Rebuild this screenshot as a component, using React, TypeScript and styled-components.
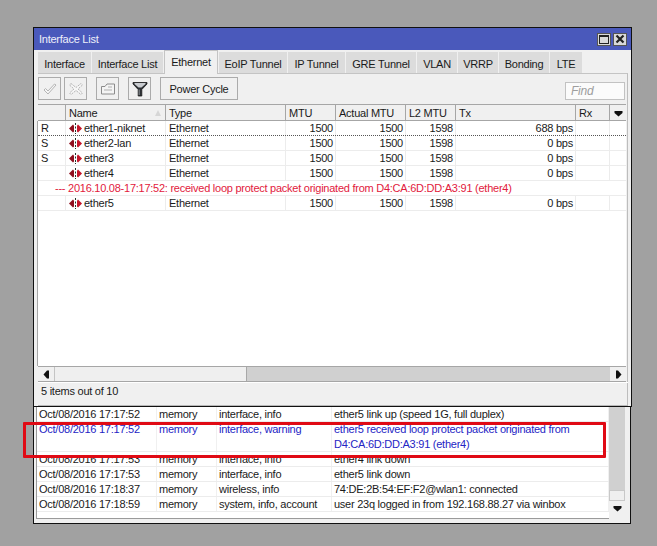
import styled, { createGlobalStyle } from 'styled-components';

const GlobalStyle = createGlobalStyle`
  html, body {
    margin: 0;
    padding: 0;
    background: #a1a1a1;
  }
  * {
    box-sizing: border-box;
  }
`;

const tabs = [
  { name: 'Interface', width: 53 },
  { name: 'Interface List', width: 71 },
  { name: 'Ethernet', width: 54 },
  { name: 'EoIP Tunnel', width: 68 },
  { name: 'IP Tunnel', width: 57 },
  { name: 'GRE Tunnel', width: 70 },
  { name: 'VLAN', width: 40 },
  { name: 'VRRP', width: 40 },
  { name: 'Bonding', width: 50 },
  { name: 'LTE', width: 32 },
];

const interfaces = [
  { flag: 'R', name: 'ether1-niknet', tx: '688 bps', focused: true },
  { flag: 'S', name: 'ether2-lan', tx: '0 bps' },
  { flag: 'S', name: 'ether3', tx: '0 bps' },
  { flag: '', name: 'ether4', tx: '0 bps' },
  { comment: '--- 2016.10.08-17:17:52: received loop protect packet originated from D4:CA:6D:DD:A3:91 (ether4)' },
  { flag: '', name: 'ether5', tx: '0 bps' },
];

const logs = [
  { time: 'Oct/08/2016 17:17:52', topics: 'interface, info', message: 'ether5 link up (speed 1G, full duplex)' },
  {
    time: 'Oct/08/2016 17:17:52',
    topics: 'interface, warning',
    message: 'ether5 received loop protect packet originated from D4:CA:6D:DD:A3:91 (ether4)',
    warning: true,
  },
  { time: 'Oct/08/2016 17:17:53', topics: 'interface, info', message: 'ether4 link down' },
  { time: 'Oct/08/2016 17:17:53', topics: 'interface, info', message: 'ether5 link down' },
  { time: 'Oct/08/2016 17:18:37', topics: 'wireless, info', message: '74:DE:2B:54:EF:F2@wlan1: connected' },
  { time: 'Oct/08/2016 17:18:59', topics: 'system, info, account', message: 'user 23q logged in from 192.168.88.27 via winbox' },
];

const PortIcon = () => (
  <svg width="13" height="11" viewBox="0 0 13 11">
    <path d="M0 5.5 L4 1.5 L5 2.5 V8.5 L4 9.5 Z" fill="#8e0f1e" />
    <path d="M13 5.5 L9 1.5 L8 2.5 V8.5 L9 9.5 Z" fill="#c4152a" />
    <path d="M6.5 0 V2 M6.5 3.5 V5.5 M6.5 7 V9 M6.5 10 V11" stroke="#24342a" strokeWidth="1" />
  </svg>
);

const CheckIcon = () => (
  <svg width="16" height="14" viewBox="0 0 16 14" fill="none">
    <path d="M2 8 L6 12 L14 3 L12.5 2 L6 9 L3.5 6.5 Z" stroke="#b4b4b4" fill="#f6f6f6" />
  </svg>
);

const CrossIcon = () => (
  <svg width="16" height="14" viewBox="0 0 16 14" fill="none">
    <path
      d="M3 1.5 L8 5.5 L13 1.5 L14.5 3 L10 7 L14.5 11 L13 12.5 L8 8.5 L3 12.5 L1.5 11 L6 7 L1.5 3 Z"
      stroke="#b4b4b4"
      fill="#f6f6f6"
      strokeDasharray="2 1"
    />
  </svg>
);

const NoteIcon = () => (
  <svg width="16" height="12" viewBox="0 0 16 12" fill="none">
    <path d="M1.5 3.5 H5 L7 1 H14.5 V11 H1.5 Z" stroke="#8c8c8c" fill="#f4f4f4" />
    <path d="M8 4 H12 M4 7 H12" stroke="#b0b0b0" />
  </svg>
);

const FilterIcon = () => (
  <svg width="16" height="16" viewBox="0 0 16 16">
    <path d="M1 1.5 H15 V3 L9.8 8.5 V15 H6.2 V8.5 L1 3 Z" fill="#2c3034" stroke="#1c1c1c" strokeWidth="0.8" />
    <path d="M2.5 2 H13.5 V3 L9.5 6.5 H6.5 L2.5 3 Z" fill="#c9ccd0" />
    <path d="M7.2 8.5 V14" stroke="#8a8f94" />
  </svg>
);

const ArrowLeft = () => (
  <svg width="7" height="9" viewBox="0 0 7 9">
    <path d="M0.5 4.5 L4 0.5 H6 V8.5 H4 Z" fill="#111" />
  </svg>
);

const ArrowRight = () => (
  <svg width="7" height="9" viewBox="0 0 7 9">
    <path d="M6.5 4.5 L3 0.5 H1 V8.5 H3 Z" fill="#111" />
  </svg>
);

const ArrowDown = () => (
  <svg width="9" height="7" viewBox="0 0 9 7">
    <path d="M4.5 6.5 L0.5 3 V1 H8.5 V3 Z" fill="#111" />
  </svg>
);

export default function App() {
  return (
    <>
      <GlobalStyle />
      <Desktop>
        <LogWindow>
          <LogList>
            {logs.map((log, i) => (
              <LogRow key={i} $warning={log.warning}>
                <LogCell>{log.time}</LogCell>
                <LogCell>memory</LogCell>
                <LogCell>{log.topics}</LogCell>
                <LogCell>{log.message}</LogCell>
              </LogRow>
            ))}
          </LogList>
          <LogScroll>
            <LogTrack />
            <LogThumb />
            <ScrollButton $height={15}>
              <ArrowDown />
            </ScrollButton>
          </LogScroll>
        </LogWindow>

        <InterfaceWindow>
          <TitleBar>
            <span>Interface List</span>
            <TitleButtons>
              <TitleButton>
                <MaximizeGlyph />
              </TitleButton>
              <TitleButton>
                <svg width="10" height="10" viewBox="0 0 10 10">
                  <path d="M1.5 1.5 L8.5 8.5 M8.5 1.5 L1.5 8.5" stroke="#222" strokeWidth="2.2" />
                </svg>
              </TitleButton>
            </TitleButtons>
          </TitleBar>

          <TabBar>
            {tabs.map((t) => (
              <Tab key={t.name} $width={t.width} $active={t.name === 'Ethernet'}>
                {t.name}
              </Tab>
            ))}
          </TabBar>

          <Panel>
            <Toolbar>
              <ToolButton>
                <CheckIcon />
              </ToolButton>
              <ToolButton>
                <CrossIcon />
              </ToolButton>
              <ToolButton $gapLeft={6}>
                <NoteIcon />
              </ToolButton>
              <ToolButton $gapLeft={6}>
                <FilterIcon />
              </ToolButton>
              <TextButton>Power Cycle</TextButton>
              <FindBox>Find</FindBox>
            </Toolbar>

            <Table>
              <HeaderRow>
                <HeaderCell />
                <HeaderCell>
                  Name
                  <SortMark />
                </HeaderCell>
                <HeaderCell>Type</HeaderCell>
                <HeaderCell>MTU</HeaderCell>
                <HeaderCell>Actual MTU</HeaderCell>
                <HeaderCell>L2 MTU</HeaderCell>
                <HeaderCell>Tx</HeaderCell>
                <HeaderCell>Rx</HeaderCell>
                <MenuCell>
                  <ArrowDown />
                </MenuCell>
              </HeaderRow>

              <Rows>
                {interfaces.map((row, i) =>
                  row.comment ? (
                    <CommentRow key={i}>{row.comment}</CommentRow>
                  ) : (
                    <DataRow key={i} $focused={row.focused}>
                      <Cell>{row.flag}</Cell>
                      <NameCell>
                        <PortIcon />
                        {row.name}
                      </NameCell>
                      <Cell>Ethernet</Cell>
                      <Cell $right>1500</Cell>
                      <Cell $right>1500</Cell>
                      <Cell $right>1598</Cell>
                      <Cell $right>{row.tx}</Cell>
                      <Cell />
                    </DataRow>
                  )
                )}
              </Rows>

              <HScroll>
                <ScrollButton $height={14}>
                  <ArrowLeft />
                </ScrollButton>
                <HThumb />
                <HTrack />
                <ScrollButton $height={14}>
                  <ArrowRight />
                </ScrollButton>
              </HScroll>
            </Table>

            <StatusBar>5 items out of 10</StatusBar>
          </Panel>
        </InterfaceWindow>

        <Highlight />
      </Desktop>
    </>
  );
}

const COLUMNS = '28px 100px 120px 50px 70px 50px 120px 34px 16px';

const Desktop = styled.div`
  position: relative;
  width: 657px;
  height: 546px;
  overflow: hidden;
  background: #a1a1a1;
  font-family: 'Liberation Sans', Arial, sans-serif;
  font-size: 11px;
  letter-spacing: -0.25px;
  color: #1a1a1a;
`;

const LogWindow = styled.div`
  position: absolute;
  left: 33px;
  top: 400px;
  width: 598px;
  height: 124px;
  display: flex;
  padding: 7px 5px 4px 2px;
  background: #f0f0f0;
  border: 1px solid #111;
  border-top: none;
`;

const LogList = styled.div`
  flex: 1;
  background: #fff;
  border-left: 1px solid #9a9a9a;
  border-bottom: 1px solid #9a9a9a;
`;

const LogRow = styled.div<{ $warning?: boolean }>`
  display: grid;
  grid-template-columns: 120px 60px 115px 1fr;
  height: ${(p) => (p.$warning ? 30 : 15)}px;
  line-height: 15px;
  border-bottom: 1px solid #ececec;
  color: ${(p) => (p.$warning ? '#2424c4' : '#1a1a1a')};
`;

const LogCell = styled.div`
  padding-left: 2px;
  border-right: 1px solid #f0f0f0;
  overflow: hidden;
`;

const LogScroll = styled.div`
  width: 16px;
  height: 109px;
  display: flex;
  flex-direction: column;
`;

const LogTrack = styled.div`
  flex: 1;
  background: #d0d0d0;
`;

const LogThumb = styled.div`
  height: 11px;
  background: #efefef;
  border: 1px solid #c8c8c8;
`;

const InterfaceWindow = styled.div`
  position: absolute;
  left: 33px;
  top: 27px;
  width: 599px;
  height: 380px;
  display: flex;
  flex-direction: column;
  background: #f0f0f0;
  border: 1px solid #111;
`;

const TitleBar = styled.div`
  height: 22px;
  flex: none;
  display: flex;
  align-items: center;
  justify-content: space-between;
  padding: 0 4px 0 5px;
  background: #4a59bb;
  color: #eef0fa;
`;

const TitleButtons = styled.div`
  display: flex;
  gap: 2px;
`;

const TitleButton = styled.div`
  width: 14px;
  height: 13px;
  display: flex;
  align-items: center;
  justify-content: center;
  background: #d9d9d9;
  border: 1px solid #555;
`;

const MaximizeGlyph = styled.div`
  width: 10px;
  height: 9px;
  border: 1px solid #222;
  border-top-width: 2px;
`;

const TabBar = styled.div`
  height: 24px;
  flex: none;
  display: flex;
  align-items: flex-end;
  gap: 1px;
  padding-left: 4px;
  margin-bottom: -1px;
  position: relative;
  z-index: 1;
`;

const Tab = styled.div<{ $width: number; $active?: boolean }>`
  width: ${(p) => p.$width}px;
  height: ${(p) => (p.$active ? 24 : 21)}px;
  margin-bottom: ${(p) => (p.$active ? 0 : 1)}px;
  display: flex;
  align-items: ${(p) => (p.$active ? 'flex-start' : 'center')};
  justify-content: center;
  padding-top: ${(p) => (p.$active ? 5 : 2)}px;
  background: ${(p) => (p.$active ? '#f0f0f0' : '#dcdcdc')};
  border: ${(p) => (p.$active ? '1px solid #c4c4c4' : 'none')};
  border-bottom: none;
  white-space: nowrap;
`;

const Panel = styled.div`
  flex: 1;
  display: flex;
  flex-direction: column;
  margin: 0 3px 0 4px;
  border-top: 1px solid #c4c4c4;
  border-right: 1px solid #bdbdbd;
`;

const Toolbar = styled.div`
  height: 30px;
  flex: none;
  display: flex;
  align-items: flex-start;
  gap: 3px;
  padding-top: 3px;
`;

const ToolButton = styled.div<{ $gapLeft?: number }>`
  width: 23px;
  height: 23px;
  margin-left: ${(p) => p.$gapLeft ?? 0}px;
  display: flex;
  align-items: center;
  justify-content: center;
  background: #f0f0f0;
  border: 1px solid #ababab;
`;

const TextButton = styled.div`
  width: 78px;
  height: 23px;
  margin-left: 6px;
  display: flex;
  align-items: center;
  justify-content: center;
  border: 1px solid #ababab;
`;

const FindBox = styled.div`
  width: 60px;
  height: 18px;
  margin: 5px 2px 0 auto;
  padding-left: 5px;
  line-height: 17px;
  background: #fbfbfb;
  border: 1px solid #c2c2c2;
  color: #9e9e9e;
  font-style: italic;
  font-size: 12px;
`;

const Table = styled.div`
  flex: 1;
  width: 588px;
  display: flex;
  flex-direction: column;
  background: #fff;
  border-top: 1px solid #a6a6a6;
`;

const HeaderRow = styled.div`
  height: 16px;
  flex: none;
  display: grid;
  grid-template-columns: ${COLUMNS};
  background: #f0f0f0;
  border-bottom: 1px solid #a6a6a6;
`;

const HeaderCell = styled.div`
  position: relative;
  padding-left: 3px;
  line-height: 16px;
  border-right: 1px solid #a6a6a6;
`;

const SortMark = styled.div`
  position: absolute;
  right: 4px;
  top: 5px;
  width: 0;
  height: 0;
  border-left: 3px solid transparent;
  border-right: 3px solid transparent;
  border-bottom: 6px solid #d6d6d6;
`;

const MenuCell = styled.div`
  display: flex;
  align-items: center;
  justify-content: center;
`;

const Rows = styled.div`
  flex: 1;
  border-left: 1px solid #a6a6a6;
  margin-left: -1px;
`;

const DataRow = styled.div<{ $focused?: boolean }>`
  height: 15px;
  display: grid;
  grid-template-columns: ${COLUMNS};
  line-height: 14px;
  border-bottom: 1px ${(p) => (p.$focused ? 'dotted #555' : 'solid #ececec')};
`;

const Cell = styled.div<{ $right?: boolean }>`
  padding: 0 2px 0 3px;
  text-align: ${(p) => (p.$right ? 'right' : 'left')};
  border-right: 1px solid #ececec;
  overflow: hidden;
  white-space: nowrap;
`;

const NameCell = styled(Cell)`
  display: flex;
  align-items: center;
  gap: 2px;
`;

const CommentRow = styled.div`
  height: 15px;
  padding-left: 17px;
  line-height: 14px;
  white-space: nowrap;
  color: #e2203c;
  border-bottom: 1px solid #ececec;
`;

const HScroll = styled.div`
  height: 16px;
  flex: none;
  display: flex;
  background: #d0d0d0;
  border-top: 1px solid #a6a6a6;
  border-bottom: 1px solid #a6a6a6;
`;

const ScrollButton = styled.div<{ $height: number }>`
  width: 16px;
  height: ${(p) => p.$height}px;
  flex: none;
  display: flex;
  align-items: center;
  justify-content: center;
  background: #f0f0f0;
`;

const HThumb = styled.div`
  width: 193px;
  background: #efefef;
  border-left: 1px solid #c4c4c4;
  border-right: 1px solid #a8a8a8;
`;

const HTrack = styled.div`
  flex: 1;
`;

const StatusBar = styled.div`
  height: 24px;
  width: 590px;
  flex: none;
  padding: 2px 0 0 3px;
  border-top: 1px solid #fff;
  border-bottom: 1px solid #b8b8b8;
`;

const Highlight = styled.div`
  position: absolute;
  left: 23px;
  top: 422px;
  width: 583px;
  height: 36px;
  border: 3px solid #e00a14;
  border-radius: 1px;
`;
